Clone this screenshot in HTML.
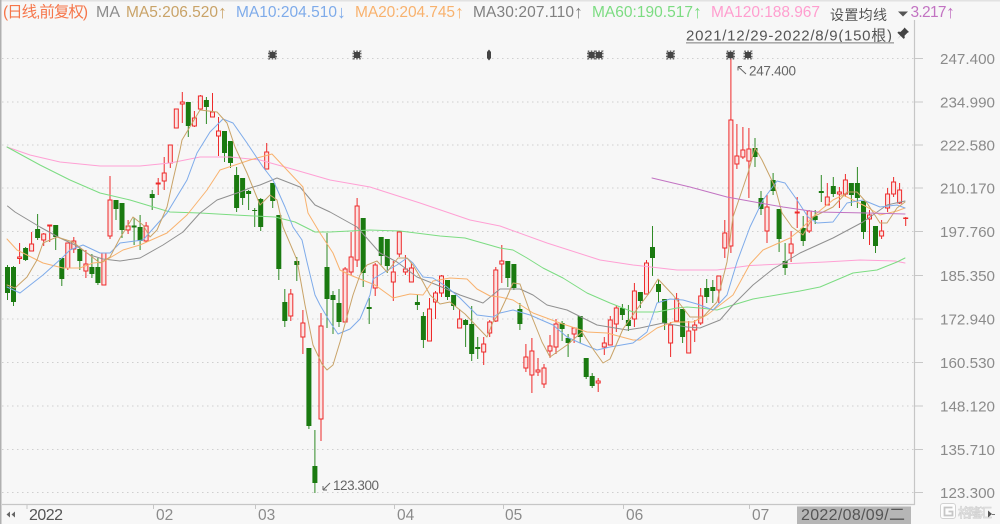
<!DOCTYPE html>
<html lang="zh">
<head>
<meta charset="utf-8">
<title>K线图</title>
<style>
html,body{margin:0;padding:0;background:#f7f7f7;width:1000px;height:524px;overflow:hidden}
svg{display:block;filter:blur(.35px)}
text{font-family:"Liberation Sans","Noto Sans CJK SC",sans-serif}
</style>
</head>
<body>
<svg xmlns="http://www.w3.org/2000/svg" width="1000" height="524" viewBox="0 0 1000 524">
<rect width="1000" height="524" fill="#f7f7f7"/>
<rect x="0" y="0" width="1000" height="1.5" fill="#e2e2e2"/>
<rect x="0" y="0" width="1.5" height="524" fill="#b0b0b0"/>

<!-- grid -->
<path d="M2 58.5H914M2 102H914M2 145H914M2 188H914M2 231.5H914M2 275.5H914M2 319H914M2 362.5H914M2 406H914M2 449.5H914M2 492.5H914" stroke="#cfcfcf" stroke-width="1" stroke-dasharray="1.5 3.5" fill="none"/>
<path d="M914 58.5H923M914 102H923M914 145H923M914 188H923M914 231.5H923M914 275.5H923M914 319H923M914 362.5H923M914 406H923M914 449.5H923M914 492.5H923" stroke="#c8c8c8" fill="none"/>
<path d="M914.5 20V505M2 504.5H915" stroke="#c6c6c6" stroke-width="1.2" fill="none"/>
<path d="M27 505V509M153.5 505V509M255.5 505V509M394.5 505V509M503.5 505V509M623.5 505V509M749.5 505V509" stroke="#c6c6c6" fill="none"/>

<!-- green wicks -->
<path fill="none" stroke="#2f8a25" stroke-width="1" d="M7.5 265V300M13.5 266V306M25.6 247V261M37.6 214V240M55.7 225V250M61.8 258V286M79.8 248V270M91.9 254V278M97.9 258V285M116 200V220M122 203V238M134.1 218V245M140.1 215V250M152.2 190V210M188.3 102V137M206.4 97V124M224.5 131V162M230.5 141V168M236.6 167V212M242.6 178V205M248.6 190V210M254.7 208V227M260.7 198V231M272.7 183V208M278.8 215V280M284.8 289V327M296.8 257V281M308.9 348V429M314.9 430V493M327 233V328M333 291V334M339 289V327M363.2 218V287M369.2 298V324M381.2 237V265M387.3 239V273M417.4 295V310M423.4 312V348M447.5 280V300M453.6 295V310M465.6 319V347M471.7 306V361M477.7 337V359M507.8 261V287M513.9 264V290M519.9 303V330M562.1 321V341M568.1 334V357M580.2 316V343M586.2 358V379M592.2 373V388M622.4 304V320M628.4 305V331M640.4 292V308M652.5 226V276M658.5 280V302M664.6 299V330M682.6 309V343M706.7 279V303M712.8 280V303M755 138V167M761 191V215M773.1 173V195M779.1 209V252M785.1 243V275M803.2 216V246M815.2 210V224M821.3 175V202M833.3 177V197M851.4 183V206M857.4 167V208M863.5 201V239M875.5 226V253"/>
<!-- green bodies -->
<path fill="none" stroke="#1a7a10" stroke-width="5" d="M7.5 267V293M13.5 267V302M25.6 248V260M37.6 229V238M55.7 225V237M61.8 258V279M79.8 249V261M91.9 267V274M97.9 267V283M116 200V209M122 203V230M134.1 225.5V227.5M140.1 227V241M152.2 194V198M188.3 102V126M206.4 100V107M224.5 131V153M230.5 141V163M236.6 175V208M242.6 178V198M248.6 191V194M254.7 210V211M260.7 199V227M272.7 183V201M278.8 215V269M284.8 302V321M296.8 261V265M308.9 348V426M314.9 466V483M327 267V299M333 295V300M339 303V322M363.2 218V273M369.2 307V309M381.2 237V256M387.3 239V266M417.4 302V305M423.4 316V340M447.5 280V297M453.6 295V306M465.6 320V325M471.7 324V354M477.7 347V349M507.8 261V278M513.9 264V288M519.9 309V324M562.1 323V329M568.1 338V343M580.2 316V337M586.2 358V377M592.2 376V386M622.4 308V315M628.4 320V326M640.4 292V301M652.5 247V258M658.5 284V292M664.6 299V323M682.6 309V337M706.7 288V297M712.8 287V291M755 148V157M761 198V209M773.1 180V191M779.1 209V239M785.1 261V268M803.2 228V241M815.2 216V220M821.3 191V193M833.3 186V194M851.4 183V195M857.4 183V198M863.5 201V232M875.5 226V246"/>

<!-- red wicks -->
<path fill="none" stroke="#ee2a2a" stroke-width="1" d="M19.6 243V264M31.6 232V251M43.7 233V246M49.7 225V242M67.8 243V270M73.8 237V253M85.9 250V278M103.9 253V285M110 176V239M128.1 220V234M146.1 222V242M158.2 178V195M164.2 157V190M170.3 145V168M176.3 109V128M182.3 92V123M194.4 111V127M200.4 95V109M212.5 93V117M218.5 117V156M266.7 143V169M290.8 289V321M302.9 310V354M321 313V441M345.1 267V322M351.1 232V275M357.1 198V267M375.2 263V296M393.3 261V301M399.3 232V257M405.4 255V275M411.4 263V282M429.5 298V341M435.5 291V319M441.5 275V297M459.6 309V328M483.7 337V365M489.7 320V337M495.8 267V322M501.8 245V283M525.9 344V372M531.9 338V393M538 358V376M544 364V388M550 335V358M556 319V354M574.1 327V343M598.2 378V392M604.3 337V355M610.3 316V345M616.3 305V332M634.4 283V327M646.5 260V294M670.6 322V357M676.6 293V321M688.7 321V353M694.7 320V342M700.7 288V325M718.8 276V303M724.8 220V258M730.9 57V253M736.9 124V169M742.9 127V159M748.9 128V198M767 195V243M791.1 231V262M797.2 197V228M809.2 210V233M827.3 183V205M839.4 187V208M845.4 174V197M869.5 210V245M881.6 220V239M887.6 188V212M893.6 177V197M899.6 183V204M905.7 217V226"/>
<!-- red bodies -->
<path fill="#fbe3e3" stroke="#ee2a2a" stroke-width="1" d="M17.6 257h4V258.5h-4zM29.6 244h4V251h-4zM41.7 234h4V240h-4zM47.7 225h4V226h-4zM65.8 243h4V268h-4zM71.8 241h4V249h-4zM83.9 264h4V271h-4zM101.9 253h4V285h-4zM108 200h4V236h-4zM126.1 226h4V230h-4zM144.1 226h4V241h-4zM156.2 183h4V184h-4zM162.2 173h4V181h-4zM168.3 145h4V163h-4zM174.3 109h4V128h-4zM180.3 102h4V104h-4zM192.4 118h4V126h-4zM198.4 96h4V109h-4zM210.5 112h4V117h-4zM216.5 131h4V136h-4zM264.7 152h4V169h-4zM288.8 294h4V316h-4zM300.9 323h4V337h-4zM319 326h4V419h-4zM343.1 269h4V322h-4zM349.1 257h4V272h-4zM355.1 206h4V260h-4zM373.2 265h4V288h-4zM391.3 272h4V282h-4zM397.3 232h4V254h-4zM403.4 269h4V272h-4zM409.4 268h4V282h-4zM427.5 309h4V341h-4zM433.5 293h4V302h-4zM439.5 276h4V293h-4zM457.6 319h4V328h-4zM481.7 344h4V352h-4zM487.7 322h4V333h-4zM493.8 270h4V321h-4zM499.8 261h4V264h-4zM523.9 357h4V368h-4zM529.9 351h4V375h-4zM536 370h4V372h-4zM542 368h4V384h-4zM548 346h4V351h-4zM554 324h4V347h-4zM572.1 328h4V334h-4zM596.2 381h4V383h-4zM602.3 343h4V347h-4zM608.3 320h4V345h-4zM614.3 308h4V324h-4zM632.4 291h4V319h-4zM644.5 263h4V294h-4zM668.6 325h4V343h-4zM674.6 299h4V321h-4zM686.7 331h4V353h-4zM692.7 325h4V330h-4zM698.7 296h4V323h-4zM716.8 276h4V290h-4zM722.8 233h4V248h-4zM728.9 120h4V246h-4zM734.9 156h4V164h-4zM740.9 150h4V157h-4zM746.9 149h4V161h-4zM765 207h4V231h-4zM789.1 244h4V253h-4zM795.2 212h4V213h-4zM807.2 211h4V231h-4zM825.3 197h4V205h-4zM837.4 192h4V194h-4zM843.4 180h4V194h-4zM867.5 215h4V219h-4zM879.6 231h4V236h-4zM885.6 194h4V208h-4zM891.6 182h4V194h-4zM897.6 190h4V203h-4zM903.7 218h4V218.5h-4z"/>

<!-- moving averages -->
<g fill="none" stroke-width="1" stroke-linejoin="round" stroke-linecap="round">
<polyline stroke="#ffa0d4" points="7,147 30,155 60,162 100,166 140,166 170,163 200,157 230,157 260,160 285,167 330,180 370,187 420,203 470,220 500,226 547,243 600,260 633,265 677,270 717,270 750,265.5 825,262 860,260 895,261 905,263"/>
<polyline stroke="#7cdc82" points="7,147 40,165 70,180 100,193 130,200 170,212 200,213 235,215 275,217 295,222 315,232 330,232 370,230 400,231 440,236 465,238 500,248 513,250 527,258 543,268 563,278 587,293 610,303 633,312 657,312 677,308 687,307 700,308 717,310 733,305 753,299 800,291 820,287 853,273 877,270 897,262 905,258"/>
<polyline stroke="#909090" points="7.5,206 15,212 25,218 40,227 60,238 75,245 90,255 103,259 120,261 140,258 163,245 183,232 200,213 217,200 240,192 250,188 260,185 277,178 300,187 315,205 330,212 357,227 380,253 397,262 417,277 437,285 460,295 483,303 500,289 520,289 533,295 547,305 567,310 597,325 627,330 640,328 663,323 687,327 700,328 720,320 733,305 753,285 773,269 785,262 800,253 833,238 863,222 887,205 905,201"/>
<polyline stroke="#f8b26e" points="7,239 17,250 33,258 43,263 63,268 80,268 93,263 103,262 123,250 140,245 167,233 187,215 207,190 220,170 250,160 257,158 272,154 287,170 303,187 308,213 320,233 333,253 340,270 350,275 375,285 393,298 410,294 423,295 433,281 450,278 467,279 477,289 490,296 500,297 513,300 533,313 560,323 587,332 607,333 633,340 640,340 657,328 673,322 693,322 707,315 720,305 733,295 750,264 763,250 790,238 800,230 817,213 833,200 843,195 867,207 880,215 897,211 905,208"/>
<polyline stroke="#7eabea" points="7,287 20,293 43,275 63,257 70,250 83,245 100,253 110,253 120,243 143,240 167,213 187,180 197,153 210,132 223,119 233,123 247,143 263,167 273,180 285,207 293,227 302,240 307,262 315,295 320,305 330,322 338,334 350,329 360,319 370,295 373,279 388,270 397,265 407,258 413,263 423,277 433,278 447,287 460,298 477,315 493,317 500,313 513,310 530,315 553,325 567,337 580,343 597,350 610,347 633,343 647,332 657,303 670,299 683,300 697,304 713,310 727,295 737,262 750,227 763,200 777,181 785,183 797,200 808,217 817,223 833,222 847,203 863,200 880,207 897,205 905,208"/>
<polyline stroke="#c9a368" points="7,285 15,288 27,277 37,260 43,243 57,237 73,242 87,253 100,263 110,257 120,238 127,227 133,217 143,225 150,237 157,230 167,207 173,180 180,150 182,140 200,110 217,112 227,123 235,147 247,173 260,205 270,195 277,200 283,227 297,260 305,305 313,345 322,364 327,370 333,365 340,342 353,295 360,275 367,265 377,261 387,272 398,258 407,258 413,265 423,282 430,295 440,304 450,302 465,314 487,337 493,322 500,312 507,297 513,283 520,284 530,312 542,342 550,357 567,345 582,332 593,349 603,363 610,359 623,329 640,305 650,292 658,279 673,295 690,317 703,317 717,302 727,262 733,217 748,173 755,148 762,160 775,187 782,213 792,227 803,235 813,217 833,207 847,192 857,192 867,203 880,223 887,223 897,208 905,202"/>
<polyline stroke="#c273c2" points="652,178 690,187 727,197 760,203 783,207 817,212 867,213 905,214"/>
</g>

<!-- markers -->
<g fill="#444">
<rect x="269.5" y="52" width="6" height="6"/><rect x="354" y="52" width="6" height="6"/>
<path d="M489 49.5l2 2.5v6l-2 2.5-2-2.5v-6z"/>
<rect x="588.5" y="52" width="6" height="6"/><rect x="596" y="52" width="6" height="6"/>
<rect x="667.5" y="52" width="6" height="6"/><rect x="727.5" y="52" width="6" height="6"/><rect x="745" y="52" width="6" height="6"/>
</g>
<g fill="none" stroke="#666" stroke-width="1.5" stroke-dasharray="1.6 1.4">
<rect x="268.75" y="51.25" width="7.5" height="7.5"/><rect x="353.25" y="51.25" width="7.5" height="7.5"/>
<rect x="587.75" y="51.25" width="7.5" height="7.5"/><rect x="595.25" y="51.25" width="7.5" height="7.5"/>
<rect x="666.75" y="51.25" width="7.5" height="7.5"/><rect x="726.75" y="51.25" width="7.5" height="7.5"/><rect x="744.25" y="51.25" width="7.5" height="7.5"/>
</g>

<!-- high/low notes -->
<path d="M738 66.5L746 74M738 66.5V70.5M738 66.5H742" stroke="#666" fill="none"/>
<text x="749" y="75.5" font-size="13.5" fill="#666" textLength="47" lengthAdjust="spacing">247.400</text>
<path d="M330 483L323 490M323 490V486M323 490H327" stroke="#666" fill="none"/>
<text x="333" y="490" font-size="13.5" fill="#666" textLength="46" lengthAdjust="spacing">123.300</text>

<!-- right axis -->
<g font-size="15.2" fill="#8b8b8b">
<text x="940" y="64" textLength="55" lengthAdjust="spacing">247.400</text>
<text x="940" y="107.5" textLength="55" lengthAdjust="spacing">234.990</text>
<text x="940" y="150.5" textLength="55" lengthAdjust="spacing">222.580</text>
<text x="940" y="193.5" textLength="55" lengthAdjust="spacing">210.170</text>
<text x="940" y="237" textLength="55" lengthAdjust="spacing">197.760</text>
<text x="940" y="281" textLength="55" lengthAdjust="spacing">185.350</text>
<text x="940" y="324.5" textLength="55" lengthAdjust="spacing">172.940</text>
<text x="940" y="368" textLength="55" lengthAdjust="spacing">160.530</text>
<text x="940" y="411.5" textLength="55" lengthAdjust="spacing">148.120</text>
<text x="940" y="455" textLength="55" lengthAdjust="spacing">135.710</text>
<text x="940" y="498" textLength="55" lengthAdjust="spacing">123.300</text>
</g>

<!-- bottom axis -->
<path d="M15 511.5v6l-3.5-3zM10 511.5v6l-3.5-3z" fill="#666"/>
<text x="29" y="520" font-size="16" fill="#555" textLength="34" lengthAdjust="spacing">2022</text>
<g font-size="15.5" fill="#8b8b8b">
<text x="156" y="520">02</text><text x="258" y="520">03</text><text x="397" y="520">04</text><text x="505" y="520">05</text><text x="626" y="520">06</text><text x="752" y="520">07</text>
</g>
<rect x="797" y="506.5" width="114" height="17.5" fill="#b6b6b6"/>
<text x="801" y="520" font-size="16" fill="#555" textLength="104" lengthAdjust="spacing">2022/08/09/二</text>

<!-- watermark -->
<rect x="940.5" y="503.5" width="15" height="15" rx="2.5" fill="#fdfdfd" stroke="#d2d2d2"/>
<path d="M952.5 507.5h-8v8h8v-4h-4" fill="none" stroke="#c6c6c6" stroke-width="1.8"/>
<text x="958" y="517.5" font-size="13" fill="#fdfdfd" stroke="#d2d2d2" stroke-width=".7" textLength="34" lengthAdjust="spacing">格隆汇</text>
<path d="M988 510.5v7l4-3.5z" fill="#555"/><path d="M992 514.5h3" stroke="#777"/>

<!-- legend -->
<g font-size="15.5">
<text x="3" y="17" fill="#f6764a" textLength="85" lengthAdjust="spacing">(日线,前复权)</text>
<text x="96" y="17" font-size="16" fill="#8c8c8c" textLength="24" lengthAdjust="spacing">MA</text>
<text x="126" y="17" fill="#c9a368" textLength="92" lengthAdjust="spacing">MA5:206.520</text>
<text x="218" y="18" font-size="18" fill="#c9a368">↑</text>
<text x="236" y="17" fill="#7eabea" textLength="101" lengthAdjust="spacing">MA10:204.510</text>
<text x="337" y="18" font-size="18" fill="#7eabea">↓</text>
<text x="355" y="17" fill="#f8b26e" textLength="100" lengthAdjust="spacing">MA20:204.745</text>
<text x="455" y="18" font-size="18" fill="#f8b26e">↑</text>
<text x="473" y="17" fill="#808080" textLength="101" lengthAdjust="spacing">MA30:207.110</text>
<text x="574" y="18" font-size="18" fill="#808080">↑</text>
<text x="592" y="17" fill="#7cdc82" textLength="101" lengthAdjust="spacing">MA60:190.517</text>
<text x="693" y="18" font-size="18" fill="#7cdc82">↑</text>
<text x="711" y="17" fill="#ff9ecf" textLength="109" lengthAdjust="spacing">MA120:188.967</text>
<text x="910.5" y="17" fill="#c273c2" textLength="36" lengthAdjust="spacing">3.217</text>
<text x="946" y="18" font-size="18" fill="#c273c2">↑</text>
</g>
<rect x="824" y="3" width="87" height="24" fill="#f7f7f7"/>
<text x="830" y="20" font-size="14" fill="#555" textLength="57" lengthAdjust="spacing">设置均线</text>
<path d="M898 11.5h10l-5 5z" fill="#555"/>
<text x="686" y="40.5" font-size="15" fill="#555" textLength="206" lengthAdjust="spacing">2021/12/29-2022/8/9(150根)</text>
<rect x="686" y="42" width="208" height="1.6" fill="#aaa"/>
<path d="M904.5 27.5l4.5 4.5-1.5.7-3 3 .3 2.2-1.2 1-3-3-3.3 3.2 3.1-3.4-3-3 1-1.1 2.2.3 3-3z" fill="#444"/>
</svg>
</body>
</html>
